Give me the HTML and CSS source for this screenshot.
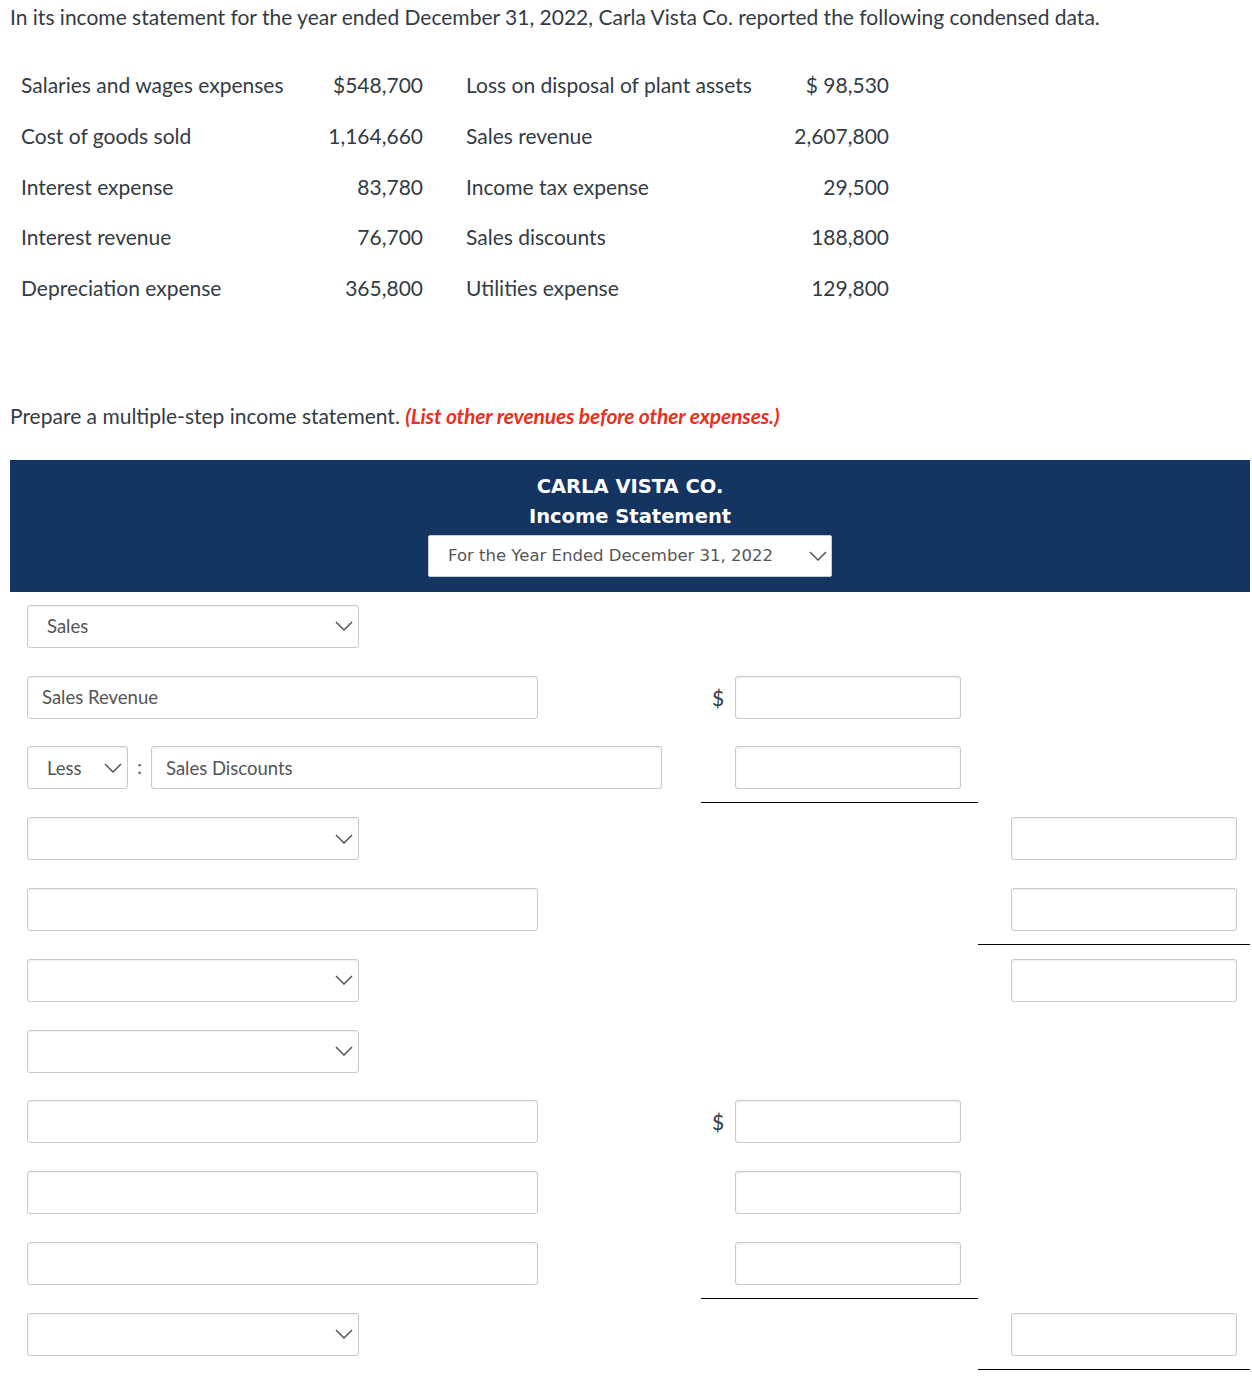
FILE: index.html
```html
<!DOCTYPE html>
<html lang="en">
<head>
  <meta charset="UTF-8" />
  <meta name="viewport" content="width=device-width, initial-scale=1.0"/>
  <title>Income Statement</title>
  <link rel="stylesheet" href="styles.css">
</head>
<body>

  <p class="intro">In its income statement for the year ended December 31, 2022, Carla Vista Co. reported the following condensed data.</p>

  <div class="data">
    <span>Salaries and wages expenses</span><span class="amt">$548,700</span>
    <span>Loss on disposal of plant assets</span><span class="amt">$ 98,530</span>

    <span>Cost of goods sold</span><span class="amt">1,164,660</span>
    <span>Sales revenue</span><span class="amt">2,607,800</span>

    <span>Interest expense</span><span class="amt">83,780</span>
    <span>Income tax expense</span><span class="amt">29,500</span>

    <span>Interest revenue</span><span class="amt">76,700</span>
    <span>Sales discounts</span><span class="amt">188,800</span>

    <span>Depreciation expense</span><span class="amt">365,800</span>
    <span>Utilities expense</span><span class="amt">129,800</span>
  </div>

  <p class="task">Prepare a multiple-step income statement. <em>(List other revenues before other expenses.)</em></p>

  <div class="statement">
    <div class="heading">
      <div class="company">CARLA VISTA CO.</div>
      <div class="title">Income Statement</div>
      <div class="period">
        <span>For the Year Ended December 31, 2022</span>
        <svg width="18" height="10" viewBox="0 0 18 10"><path d="M1 1 L9 9 L17 1" fill="none" stroke="#555" stroke-width="1.5"/></svg>
      </div>
    </div>

    <div class="rows">
      <!-- 1 -->
      <div class="row">
        <div class="col-left">
          <div class="select wide"><span>Sales</span><svg width="18" height="10" viewBox="0 0 18 10"><path d="M1 1 L9 9 L17 1" fill="none" stroke="#555" stroke-width="1.5"/></svg></div>
        </div>
        <div class="col-mid"></div>
        <div class="col-right"></div>
      </div>
      <!-- 2 -->
      <div class="row">
        <div class="col-left"><input class="field" type="text" value="Sales Revenue"></div>
        <div class="col-mid"><span class="dollar">$</span><input class="amount" type="text"></div>
        <div class="col-right"></div>
      </div>
      <!-- 3 -->
      <div class="row">
        <div class="col-left">
          <div class="select less"><span>Less</span><svg width="18" height="10" viewBox="0 0 18 10"><path d="M1 1 L9 9 L17 1" fill="none" stroke="#555" stroke-width="1.5"/></svg></div>
          <span class="colon">:</span>
          <input class="field" type="text" value="Sales Discounts">
        </div>
        <div class="col-mid total"><span class="dollar"></span><input class="amount" type="text"></div>
        <div class="col-right"></div>
      </div>
      <!-- 4 -->
      <div class="row">
        <div class="col-left">
          <div class="select wide"><span></span><svg width="18" height="10" viewBox="0 0 18 10"><path d="M1 1 L9 9 L17 1" fill="none" stroke="#555" stroke-width="1.5"/></svg></div>
        </div>
        <div class="col-mid"></div>
        <div class="col-right"><input class="amount" type="text"></div>
      </div>
      <!-- 5 -->
      <div class="row">
        <div class="col-left"><input class="field" type="text"></div>
        <div class="col-mid"></div>
        <div class="col-right total"><input class="amount" type="text"></div>
      </div>
      <!-- 6 -->
      <div class="row">
        <div class="col-left">
          <div class="select wide"><span></span><svg width="18" height="10" viewBox="0 0 18 10"><path d="M1 1 L9 9 L17 1" fill="none" stroke="#555" stroke-width="1.5"/></svg></div>
        </div>
        <div class="col-mid"></div>
        <div class="col-right"><input class="amount" type="text"></div>
      </div>
      <!-- 7 -->
      <div class="row">
        <div class="col-left">
          <div class="select wide"><span></span><svg width="18" height="10" viewBox="0 0 18 10"><path d="M1 1 L9 9 L17 1" fill="none" stroke="#555" stroke-width="1.5"/></svg></div>
        </div>
        <div class="col-mid"></div>
        <div class="col-right"></div>
      </div>
      <!-- 8 -->
      <div class="row">
        <div class="col-left"><input class="field" type="text"></div>
        <div class="col-mid"><span class="dollar">$</span><input class="amount" type="text"></div>
        <div class="col-right"></div>
      </div>
      <!-- 9 -->
      <div class="row">
        <div class="col-left"><input class="field" type="text"></div>
        <div class="col-mid"><span class="dollar"></span><input class="amount" type="text"></div>
        <div class="col-right"></div>
      </div>
      <!-- 10 -->
      <div class="row">
        <div class="col-left"><input class="field" type="text"></div>
        <div class="col-mid total"><span class="dollar"></span><input class="amount" type="text"></div>
        <div class="col-right"></div>
      </div>
      <!-- 11 -->
      <div class="row">
        <div class="col-left">
          <div class="select wide"><span></span><svg width="18" height="10" viewBox="0 0 18 10"><path d="M1 1 L9 9 L17 1" fill="none" stroke="#555" stroke-width="1.5"/></svg></div>
        </div>
        <div class="col-mid"></div>
        <div class="col-right total"><input class="amount" type="text"></div>
      </div>
    </div>
  </div>

</body>
</html>
```

FILE: styles.css
```css
body {
  margin: 0;
  background-color: #fff;
  color: #333b44;
  font-family: Lato, "Open Sans", sans-serif;
  font-size: 21px;
}

.intro {
  margin: 0;
  padding: 0 10px;
  line-height: 34px;
  white-space: nowrap;
}

.data {
  display: grid;
  grid-template-columns: 280px 122px 330px 136px;
  margin: 26px 0 0 21px;
  line-height: 50.75px;
  white-space: nowrap;
}

.data span:nth-child(4n+3) {
  padding-left: 43px;
}

.data .amt {
  text-align: right;
}

.task {
  margin: 85px 0 0;
  padding: 0 10px;
  line-height: 34px;
  white-space: nowrap;
}

.task em {
  color: #e8301c;
  font-weight: bold;
  letter-spacing: -0.15px;
}

.statement {
  width: 1240px;
  margin: 27px 0 0 10px;
}

.heading {
  background-color: #143462;
  color: #fff;
  height: 132px;
  box-sizing: border-box;
  padding-top: 12px;
  display: flex;
  flex-direction: column;
  align-items: center;
  font-family: "DejaVu Sans", Verdana, sans-serif;
  font-weight: bold;
  font-size: 19.5px;
  line-height: 30px;
}

.period {
  margin-top: 3px;
  width: 404px;
  height: 42px;
  box-sizing: border-box;
  background-color: #fff;
  border: 1px solid #ccc;
  border-radius: 2px;
  display: flex;
  align-items: center;
  justify-content: space-between;
  padding: 0 4px 0 19px;
  color: #555;
  font-weight: normal;
  font-size: 16.5px;
}

.rows {
  margin-top: 13px;
  padding-left: 17px;
}

.row {
  display: grid;
  grid-template-columns: 674px 277px 272px;
  height: 57px;
  margin-bottom: 13.8px;
}

.col-left,
.col-mid,
.col-right {
  display: flex;
  align-items: flex-start;
  box-sizing: border-box;
  height: 57px;
}

.col-right {
  padding-left: 33px;
}

.total {
  border-bottom: 1px solid #000;
}

input,
.select {
  box-sizing: border-box;
  height: 43px;
  border: 1px solid #c9c9c9;
  border-radius: 3px;
  box-shadow: inset 0 1px 2px rgba(0, 0, 0, 0.07);
  background-color: #fff;
  font-family: Lato, "Open Sans", sans-serif;
  font-size: 18.5px;
  color: #555;
  margin: 0;
  outline: none;
}

.field {
  width: 511px;
  padding: 0 14px;
}

.amount {
  width: 226px;
  padding: 0 10px;
}

.select {
  display: flex;
  align-items: center;
  justify-content: space-between;
  padding: 0 5px 0 19px;
}

.select.wide {
  width: 332px;
}

.select.less {
  width: 101px;
}

.colon {
  width: 23px;
  text-align: center;
  line-height: 43px;
  font-size: 18.5px;
  color: #555;
}

.dollar {
  width: 34px;
  text-align: center;
  line-height: 43px;
  font-size: 21px;
  color: #333b44;
}
```
